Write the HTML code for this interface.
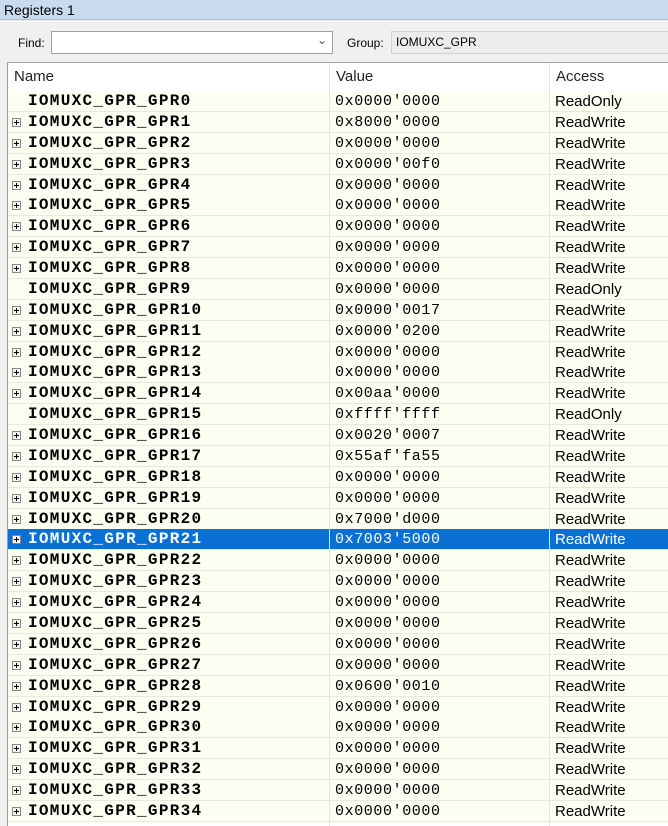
<!DOCTYPE html><html><head><style>
body{margin:0;width:668px;height:825px;overflow:hidden;background:#f0f0f0;font-family:"Liberation Sans",sans-serif;}
.title{position:absolute;left:0;top:0;width:668px;height:20px;background:#c9dbee;border-bottom:1px solid #a9bcd2;font-size:14px;line-height:20px;padding-left:4px;box-sizing:border-box;color:#000}
.tb{position:absolute;left:0;top:21px;width:668px;height:42px;background:#f0f0f0;border-top:1px solid #fff}
.find{position:absolute;left:18px;top:36px;font-size:12px}
.combo{position:absolute;left:51px;top:31px;width:282px;height:23px;background:#fff;border:1px solid #a0a0a0;box-sizing:border-box}
.combo span{position:absolute;right:5px;top:1px;font-size:12px;color:#555}
.grp{position:absolute;left:347px;top:36px;font-size:12px}
.gbox{position:absolute;left:391px;top:31px;width:277px;height:23px;background:#ececec;border:1px solid #d0d0d0;border-right:none;box-sizing:border-box;font-size:12px;line-height:21px;padding-left:4px}
.grid{position:absolute;left:7px;top:62px;width:661px;height:763px;background:#fff;border-left:1px solid #a0a0a0;border-top:1px solid #a0a0a0}
.hdr{position:absolute;left:0;top:0;width:661px;height:28px;background:#fff;font-size:15px;color:#222}
.hdr div{position:absolute;top:5px}
.vl{position:absolute;top:0;width:1px;height:763px;background:#e4e4e4}
.row{position:absolute;left:0;width:661px;height:21px;background:#fdfdf2;border-bottom:1px solid #e8e8e0;box-sizing:border-box}
.n{position:absolute;left:20px;top:1px;font-family:"Liberation Mono",monospace;font-weight:bold;font-size:16px;letter-spacing:1.3px;line-height:19px}
.v{position:absolute;left:327px;top:1px;font-family:"Liberation Mono",monospace;font-size:15px;letter-spacing:0.6px;line-height:19px}
.a{position:absolute;left:547px;top:1px;font-size:15px;line-height:19px}
.p{position:absolute;left:4px;top:6px;width:9px;height:9px;border:1px solid #888;box-sizing:border-box;background:#f4f4f4}
.p:before{content:"";position:absolute;left:1px;top:3px;width:5px;height:1px;background:#000}
.p:after{content:"";position:absolute;left:3px;top:1px;width:1px;height:5px;background:#000}
.sel{background:#0a70d6;color:#fff}
</style></head><body>
<div class="title">Registers 1</div>
<div class="tb"></div>
<div class="find">Find:</div>
<div class="combo"><span>&#8964;</span></div>
<div class="grp">Group:</div>
<div class="gbox">IOMUXC_GPR</div>
<div class="grid">
<div class="hdr"><div style="left:6px">Name</div><div style="left:328px">Value</div><div style="left:548px">Access</div></div>
<div id="rows"></div>
<div class="vl" style="left:321px"></div><div class="vl" style="left:541px"></div>
</div>
<script>
var v=["0000'0000","8000'0000","0000'0000","0000'00f0","0000'0000","0000'0000","0000'0000","0000'0000","0000'0000","0000'0000","0000'0017","0000'0200","0000'0000","0000'0000","00aa'0000","ffff'ffff","0020'0007","55af'fa55","0000'0000","0000'0000","7000'd000","7003'5000","0000'0000","0000'0000","0000'0000","0000'0000","0000'0000","0000'0000","0600'0010","0000'0000","0000'0000","0000'0000","0000'0000","0000'0000","0000'0000"];
var ro=[0,9,15],h="";
for(var i=0;i<35;i++){var r=ro.indexOf(i)>=0;
h+='<div class="row'+(i==21?' sel':'')+'" style="top:'+(28+i*20.88)+'px">'+(r?'':'<div class="p"></div>')+'<div class="n">IOMUXC_GPR_GPR'+i+'</div><div class="v">0x'+v[i]+'</div><div class="a">'+(r?'ReadOnly':'ReadWrite')+'</div></div>';}
document.getElementById('rows').innerHTML=h;
</script>
</body></html>
